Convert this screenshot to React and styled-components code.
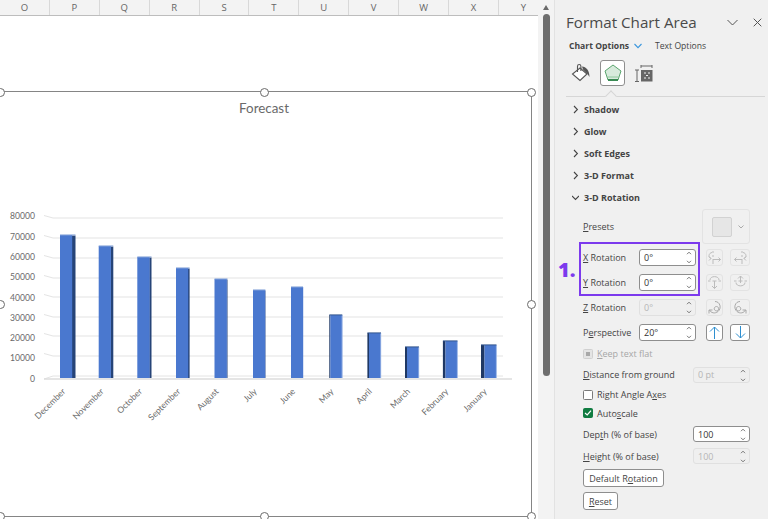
import React from "react";
import styled, { createGlobalStyle } from "styled-components";

const Global = createGlobalStyle`
  html, body { margin: 0; padding: 0; width: 768px; height: 519px; overflow: hidden; background: #fff; }
  #root { width: 768px; height: 519px; }
  * { box-sizing: border-box; }
`;

const Page = styled.div`
  display: flex;
  width: 768px;
  height: 519px;
  overflow: hidden;
  font-family: "Open Sans", "Noto Sans", sans-serif;
  color: #444;
`;

const Sheet = styled.div`
  position: relative;
  width: 538px;
  height: 519px;
  flex: none;
  overflow: hidden;
  background: #fff;
`;

const ColumnHeader = styled.div`
  display: grid;
  grid-template-columns: repeat(11, 49.9px);
  height: 16px;
  background: #f3f3f3;
  border-bottom: 1px solid #bdbdbd;
`;

const ColumnCell = styled.div`
  display: flex;
  align-items: center;
  justify-content: center;
  font-size: 9.5px;
  color: #666;
  border-right: 1px solid #d8d8d8;
`;

const ChartFrame = styled.div`
  position: absolute;
  left: -1px;
  top: 91px;
  width: 533px;
  height: 426px;
  border: 1.5px solid #858585;
  background: #fff;
`;

const ChartSvg = styled.svg`
  position: absolute;
  left: 0;
  top: 0;
  font-family: Lato, "Liberation Sans", sans-serif;
`;

const Handle = styled.span`
  position: absolute;
  left: ${(p) => p.$x - 4}px;
  top: ${(p) => p.$y - 4}px;
  width: 9px;
  height: 9px;
  border-radius: 50%;
  background: #fff;
  border: 1.5px solid #6b6b6b;
`;

const Scrollbar = styled.div`
  position: relative;
  width: 17px;
  height: 519px;
  flex: none;
  background: #f3f3f3;
  border-right: 1px solid #e2e2e2;
`;

const ScrollUp = styled.span`
  position: absolute;
  left: 5px;
  top: 5px;
  width: 0;
  height: 0;
  border-left: 3.5px solid transparent;
  border-right: 3.5px solid transparent;
  border-bottom: 5px solid #6a6a6a;
`;

const ScrollThumb = styled.span`
  position: absolute;
  left: 5px;
  top: 14px;
  width: 7px;
  height: 362px;
  border-radius: 4px;
  background: #6e6e6e;
`;

const Panel = styled.aside`
  position: relative;
  flex: 1;
  height: 519px;
  background: #f0f0f0;
  display: flex;
  flex-direction: column;
`;

const TitleRow = styled.div`
  display: flex;
  align-items: center;
  height: 24px;
  margin: 10px 0 0 11px;
`;

const Title = styled.div`
  font-size: 15.2px;
  color: #4a4a4a;
  flex: 1;
  white-space: nowrap;
`;

const TitleButton = styled.svg`
  flex: none;
  margin-right: ${(p) => p.$mr}px;
`;

const TabRow = styled.div`
  display: flex;
  align-items: center;
  height: 16px;
  margin: 4px 0 0 14px;
  font-size: 8.6px;
`;

const TabActive = styled.span`
  font-weight: 700;
  color: #444;
  white-space: nowrap;
`;

const TabCaret = styled.svg`
  margin: 0 13px 0 5px;
`;

const Tab = styled.span`
  color: #444;
  white-space: nowrap;
`;

const IconRow = styled.div`
  display: flex;
  align-items: center;
  height: 26px;
  margin: 6px 0 0 15px;
  gap: 8px;
`;

const IconButton = styled.div`
  width: ${(p) => p.$w}px;
  height: 26px;
  display: flex;
  align-items: center;
  justify-content: center;
  border-radius: 3px;
  background: ${(p) => (p.$selected ? "#fff" : "transparent")};
  border: 1px solid ${(p) => (p.$selected ? "#8f8f8f" : "transparent")};
`;

const Divider = styled.div`
  position: relative;
  height: 1px;
  margin: 10px 3px 0 11px;
  background: #d6d6d6;
`;

const Notch = styled.span`
  position: absolute;
  left: 41px;
  top: -4px;
  width: 8px;
  height: 8px;
  transform: rotate(45deg);
  background: #f0f0f0;
  border-left: 1px solid #d6d6d6;
  border-top: 1px solid #d6d6d6;
`;

const Sections = styled.div`
  margin-top: 1px;
`;

const SectionRow = styled.div`
  display: flex;
  align-items: center;
  height: 22px;
  padding-left: 17px;
  font-size: 9px;
  font-weight: 700;
  color: #444;
`;

const Caret = styled.svg`
  flex: none;
  margin-right: 5px;
`;

const Form = styled.div`
  padding-left: 28px;
  padding-right: 18px;
  margin-top: 1px;
`;

const Row = styled.div`
  display: flex;
  align-items: center;
  height: ${(p) => p.$h}px;
  font-size: 9px;
`;

const Label = styled.div`
  width: ${(p) => p.$w || 56}px;
  flex: none;
  white-space: nowrap;
  color: ${(p) => (p.$off ? "#a6a6a6" : "#444")};
`;

const Spin = styled.div`
  position: relative;
  flex: none;
  width: 57px;
  height: ${(p) => p.$h || 17}px;
  padding-left: 4px;
  display: flex;
  align-items: center;
  font-size: 9px;
  color: ${(p) => (p.$off ? "#b5b5b5" : "#333")};
  background: ${(p) => (p.$off ? "#efefef" : "#fff")};
  border: 1px solid ${(p) => (p.$off ? "#e0e0e0" : "#8e8e8e")};
  border-radius: 3px;
`;

const SpinArrows = styled.svg`
  position: absolute;
  right: 3px;
  top: 1px;
`;

const ActionGroup = styled.div`
  display: flex;
  margin-left: 10px;
  gap: 7px;
`;

const Action = styled.div`
  width: ${(p) => p.$w}px;
  height: 17px;
  flex: none;
  display: flex;
  align-items: center;
  justify-content: center;
  border-radius: 3px;
  background: ${(p) => (p.$on ? "#fff" : "#f0f0f0")};
  border: 1px solid ${(p) => (p.$on ? "#8e8e8e" : "#e3e3e3")};
`;

const PresetBox = styled.div`
  width: 48px;
  height: 35px;
  margin-left: 63px;
  display: flex;
  align-items: center;
  padding-left: 9px;
  gap: 6px;
  border: 1px solid #e3e3e3;
  border-radius: 3px;
`;

const PresetSwatch = styled.div`
  width: 20px;
  height: 20px;
  background: #e6e6e6;
  border: 1px solid #d2d2d2;
  border-radius: 2px;
`;

const CheckBox = styled.div`
  width: 10px;
  height: 10px;
  flex: none;
  display: flex;
  align-items: center;
  justify-content: center;
  margin-right: 4px;
  border-radius: 1.5px;
  background: ${(p) => (p.$checked ? "#107c41" : p.$off ? "#e4e4e4" : "#fff")};
  border: 1px solid ${(p) => (p.$checked ? "#107c41" : p.$off ? "#d0d0d0" : "#7a7a7a")};
`;

const CheckDot = styled.span`
  width: 4px;
  height: 4px;
  background: #a8a8a8;
`;

const PushButton = styled.div`
  display: inline-flex;
  align-items: center;
  justify-content: center;
  width: ${(p) => p.$w}px;
  height: 18px;
  font-size: 9px;
  color: #444;
  background: #fff;
  border: 1px solid #8e8e8e;
  border-radius: 3px;
  white-space: nowrap;
`;

const ButtonRow = styled.div`
  display: flex;
  align-items: flex-start;
  height: ${(p) => p.$h}px;
  margin-top: ${(p) => p.$mt || 0}px;
`;

const Annotation = styled.div`
  position: absolute;
  left: 24px;
  top: 242px;
  width: 121px;
  height: 54px;
  border: 2px solid #7c3aed;
  pointer-events: none;
`;

const AnnotationNumber = styled.div`
  position: absolute;
  left: 3px;
  top: 257px;
  font-family: "Open Sans", sans-serif;
  font-size: 20px;
  line-height: 26px;
  font-weight: 800;
  color: #7c3aed;
`;

const Key = styled.span`
  text-decoration: underline;
  text-underline-offset: 1px;
  text-decoration-thickness: 1px;
`;

const columns = ["O", "P", "Q", "R", "S", "T", "U", "V", "W", "X", "Y"];
const gridY = [218, 238, 258, 278, 297, 317, 336, 356];
const valueLabels = [
  ["80000", 218.5], ["70000", 239.5], ["60000", 259.5], ["50000", 279.5], ["40000", 300.5],
  ["30000", 320.5], ["20000", 340.5], ["10000", 361], ["0", 381.5],
];
const bars = [
  { name: "December", x: 60, top: 235, side: 3.5, at: "r" },
  { name: "November", x: 98.7, top: 246, side: 2.6, at: "r" },
  { name: "October", x: 137.3, top: 257, side: 2.2, at: "r" },
  { name: "September", x: 176, top: 268, side: 1.6, at: "r" },
  { name: "August", x: 214.5, top: 279, side: 1, at: "r" },
  { name: "July", x: 253, top: 290, side: 0.4, at: "r" },
  { name: "June", x: 291, top: 287, side: 0, at: "r" },
  { name: "May", x: 330.3, top: 315, side: 1, at: "l" },
  { name: "April", x: 369, top: 333, side: 1.6, at: "l" },
  { name: "March", x: 407, top: 347, side: 2, at: "l" },
  { name: "February", x: 445.5, top: 341, side: 2.6, at: "l" },
  { name: "January", x: 484.5, top: 345, side: 3.5, at: "l" },
];
const handles = [
  [0, 92], [264, 92], [531, 92], [0, 304], [531, 304], [0, 516], [264, 516], [531, 516],
];

function Chart() {
  return (
    <ChartSvg width="538" height="519" viewBox="0 0 538 519">
      <text x="264" y="112.5" textAnchor="middle" fontSize="13.4" fill="#6a6a6a">Forecast</text>
      {gridY.map((y) => (
        <g key={y}>
          <line x1="53" x2="503" y1={y} y2={y} stroke="#e4e4e4" strokeWidth="1.1" />
          <line x1="44" x2="53" y1={y - 2.5} y2={y} stroke="#e4e4e4" strokeWidth="1" />
        </g>
      ))}
      {valueLabels.map(([label, y]) => (
        <text key={label} x="35" y={y} textAnchor="end" fontSize="8.6" fill="#6a6a6a">{label}</text>
      ))}
      <line x1="53" x2="503" y1="376" y2="376" stroke="#e4e4e4" strokeWidth="1" />
      <line x1="44" x2="53" y1="379" y2="376" stroke="#e4e4e4" strokeWidth="1" />
      <line x1="44" x2="512" y1="379" y2="379" stroke="#dcdcdc" strokeWidth="1.4" />
      {bars.map((b) => (
        <g key={b.name}>
          {b.at === "r" && b.side > 0 && (
            <rect x={b.x + 12} y={b.top + 0.5} width={b.side} height={377.5 - b.top} fill="#264478" />
          )}
          {b.at === "l" && (
            <rect x={b.x - b.side} y={b.top} width={b.side} height={378 - b.top} fill="#1f3864" />
          )}
          <rect x={b.x} y={b.top} width="12" height={378 - b.top} fill="#4a78cf" />
          <rect x={b.x + 11.4} y={b.top} width="0.8" height={378 - b.top} fill={b.at === "l" ? "#a9c0ea" : "#4a78cf"} />
          <rect x={b.x - (b.at === "l" ? b.side : 0)} y={b.top - 0.6} width={12 + b.side} height="1" fill={b.at === "l" ? "#34568f" : "#8eaadb"} />
        </g>
      ))}
      {bars.map((b, i) => {
        const x = 66 + 38.3 * i;
        return (
          <text key={b.name} x={x} y="392" textAnchor="end" fontSize="8.6" fill="#6a6a6a" transform={`rotate(-45 ${x} 392)`}>{b.name}</text>
        );
      })}
    </ChartSvg>
  );
}

const Arrows = () => (
  <SpinArrows width="6" height="13" viewBox="0 0 6 13" fill="none" stroke="#666" strokeWidth="0.9">
    <path d="M1 3.2 3 1.2 5 3.2" />
    <path d="M1 9.8 3 11.8 5 9.8" />
  </SpinArrows>
);

const ChevRight = () => (
  <Caret width="7" height="9" viewBox="0 0 7 9" fill="none" stroke="#444" strokeWidth="1.1">
    <path d="M2 1 5.4 4.5 2 8" />
  </Caret>
);

const ChevDown = () => (
  <Caret width="7" height="9" viewBox="0 0 7 9" fill="none" stroke="#444" strokeWidth="1.1">
    <path d="M0 3 3.5 6.4 7 3" />
  </Caret>
);

const RotateGlyph = ({ d, color = "#bcbcbc", sw = 1 }) => (
  <svg width="15" height="15" viewBox="0 0 15 15" fill="none" stroke={color} strokeWidth={sw}>
    <path d={d} />
  </svg>
);

const glyphs = {
  xl: "M6 1V3M6 5V7M6 9V14M5 2.5C1.5 3 1 7.5 4 8.5M2 6.5 4 8.5 2 10.5M6 9.5H13.5M11.5 7.5 13.5 9.5 11.5 11.5",
  xr: "M9 1V3M9 5V7M9 9V14M10 2.5C13.5 3 14 7.5 11 8.5M13 6.5 11 8.5 13 10.5M9 9.5H1.5M3.5 7.5 1.5 9.5 3.5 11.5",
  yu: "M1 6H3.5M5.5 6H9.5M11.5 6H14M3 5C3 .5 12 .5 12 5M7.5 6V13.5M5 11 7.5 13.5 10 11",
  yd: "M1 6H3.5M5.5 6H9.5M11.5 6H14M3 7.5C3 12 12 12 12 7.5M7.5 1V8M5 3.5 7.5 1 10 3.5",
  zl: "M9.5 6.5A2.2 2.2 0 1 1 9.4 6.5M8 1.5C13 1.5 15 8 11 11.5 8 14 4 13 2.5 10M2 13.5V10H5.5",
  zr: "M5.5 6.5A2.2 2.2 0 1 0 5.6 6.5M7 1.5C2 1.5 0 8 4 11.5 7 14 11 13 12.5 10M13 13.5V10H9.5",
  up: "M7.5 14V2M3 6.5 7.5 2 12 6.5",
  down: "M7.5 1V13M3 8.5 7.5 13 12 8.5",
};

export default function App() {
  return (
    <Page>
      <Global />
      <Sheet>
        <ColumnHeader>
          {columns.map((c) => (
            <ColumnCell key={c}>{c}</ColumnCell>
          ))}
        </ColumnHeader>
        <ChartFrame />
        <Chart />
        {handles.map(([x, y]) => (
          <Handle key={`${x}-${y}`} $x={x} $y={y} />
        ))}
      </Sheet>
      <Scrollbar>
        <ScrollUp />
        <ScrollThumb />
      </Scrollbar>
      <Panel>
        <TitleRow>
          <Title>Format Chart Area</Title>
          <TitleButton $mr={15} width="11" height="7" viewBox="0 0 11 7" fill="none" stroke="#555" strokeWidth="1">
            <path d="M.5 1 5.5 6 10.5 1" />
          </TitleButton>
          <TitleButton $mr={6} width="9" height="9" viewBox="0 0 9 9" fill="none" stroke="#555" strokeWidth="1">
            <path d="M.7.7 8.3 8.3M8.3.7.7 8.3" />
          </TitleButton>
        </TitleRow>
        <TabRow>
          <TabActive>Chart Options</TabActive>
          <TabCaret width="8" height="6" viewBox="0 0 8 6" fill="none" stroke="#3a96dd" strokeWidth="1.1">
            <path d="M.5 1 4 4.6 7.5 1" />
          </TabCaret>
          <Tab>Text Options</Tab>
        </TabRow>
        <IconRow>
          <IconButton $w={22}>
            <svg width="20" height="20" viewBox="0 0 20 20" fill="none" stroke="#555" strokeWidth="1.1">
              <path d="M9 5 16 11 9 17.5 1.5 11Z" fill="#fff" />
              <path d="M6.5 9V3.2A1.7 1.7 0 0 1 9.9 3.2V8" />
              <path d="M11 3.5C15 4 18.5 7 18.5 14L16.5 11 12 6.5Z" fill="#555" stroke="none" />
            </svg>
          </IconButton>
          <IconButton $w={25} $selected>
            <svg width="20" height="20" viewBox="0 0 20 20" fill="none">
              <path d="M10 2 18 8 15 17H5L2 8Z" fill="#d7ebdc" stroke="#5aa56e" strokeWidth="1" />
              <path d="M5 17H15" stroke="#1f7a3d" strokeWidth="1.6" />
              <path d="M4.6 14H15.4" stroke="#7fbf91" strokeWidth="0.8" />
            </svg>
          </IconButton>
          <IconButton $w={22}>
            <svg width="20" height="20" viewBox="0 0 20 20" fill="none" stroke="#666" strokeWidth="1">
              <path d="M1 7H5M1 18.5H5M3 7V18.5" />
              <path d="M7 2V5M18 2V5M7 3H18" />
              <rect x="7" y="7" width="11.5" height="11.5" fill="#666" stroke="none" />
              <path d="M10 10H12M14 10H16M10 15H12M14 15H16M12 12.5H14" stroke="#f0f0f0" />
            </svg>
          </IconButton>
        </IconRow>
        <Divider>
          <Notch />
        </Divider>
        <Sections>
          <SectionRow><ChevRight />Shadow</SectionRow>
          <SectionRow><ChevRight />Glow</SectionRow>
          <SectionRow><ChevRight />Soft Edges</SectionRow>
          <SectionRow><ChevRight />3-D Format</SectionRow>
          <SectionRow><ChevDown />3-D Rotation</SectionRow>
        </Sections>
        <Form>
          <Row $h={35}>
            <Label><Key>P</Key>resets</Label>
            <PresetBox>
              <PresetSwatch />
              <svg width="6" height="4" viewBox="0 0 6 4" fill="none" stroke="#aaa" strokeWidth="1">
                <path d="M.5.5 3 3 5.5.5" />
              </svg>
            </PresetBox>
          </Row>
          <Row $h={26}>
            <Label><Key>X</Key> Rotation</Label>
            <Spin>0°<Arrows /></Spin>
            <ActionGroup>
              <Action $w={17}><RotateGlyph d={glyphs.xl} /></Action>
              <Action $w={20}><RotateGlyph d={glyphs.xr} /></Action>
            </ActionGroup>
          </Row>
          <Row $h={25}>
            <Label><Key>Y</Key> Rotation</Label>
            <Spin>0°<Arrows /></Spin>
            <ActionGroup>
              <Action $w={17}><RotateGlyph d={glyphs.yu} /></Action>
              <Action $w={20}><RotateGlyph d={glyphs.yd} /></Action>
            </ActionGroup>
          </Row>
          <Row $h={25}>
            <Label><Key>Z</Key> Rotation</Label>
            <Spin $off>0°<Arrows /></Spin>
            <ActionGroup>
              <Action $w={17}><RotateGlyph d={glyphs.zl} color="#a8a8a8" /></Action>
              <Action $w={20}><RotateGlyph d={glyphs.zr} color="#a8a8a8" /></Action>
            </ActionGroup>
          </Row>
          <Row $h={24}>
            <Label>P<Key>e</Key>rspective</Label>
            <Spin>20°<Arrows /></Spin>
            <ActionGroup>
              <Action $w={17} $on><RotateGlyph d={glyphs.up} color="#2e8fd0" /></Action>
              <Action $w={20} $on><RotateGlyph d={glyphs.down} color="#2e8fd0" /></Action>
            </ActionGroup>
          </Row>
          <Row $h={19}>
            <CheckBox $off><CheckDot /></CheckBox>
            <Label $off $w={90}><Key>K</Key>eep text flat</Label>
          </Row>
          <Row $h={23}>
            <Label $w={110}><Key>D</Key>istance from ground</Label>
            <Spin $off $h={16}>0 pt<Arrows /></Spin>
          </Row>
          <Row $h={17}>
            <CheckBox />
            <Label $w={90}>Right Angle A<Key>x</Key>es</Label>
          </Row>
          <Row $h={20}>
            <CheckBox $checked>
              <svg width="8" height="8" viewBox="0 0 8 8" fill="none" stroke="#fff" strokeWidth="1.2">
                <path d="M1 4 3.2 6 7 1.6" />
              </svg>
            </CheckBox>
            <Label $w={90}>Auto<Key>s</Key>cale</Label>
          </Row>
          <Row $h={22}>
            <Label $w={110}>Dep<Key>t</Key>h (% of base)</Label>
            <Spin $h={16}>100<Arrows /></Spin>
          </Row>
          <Row $h={22}>
            <Label $w={110}><Key>H</Key>eight (% of base)</Label>
            <Spin $off $h={16}>100<Arrows /></Spin>
          </Row>
          <ButtonRow $h={23} $mt={2}>
            <PushButton $w={81}>Default R<Key>o</Key>tation</PushButton>
          </ButtonRow>
          <ButtonRow $h={18}>
            <PushButton $w={35}><Key>R</Key>eset</PushButton>
          </ButtonRow>
        </Form>
        <Annotation />
        <AnnotationNumber>1.</AnnotationNumber>
      </Panel>
    </Page>
  );
}
